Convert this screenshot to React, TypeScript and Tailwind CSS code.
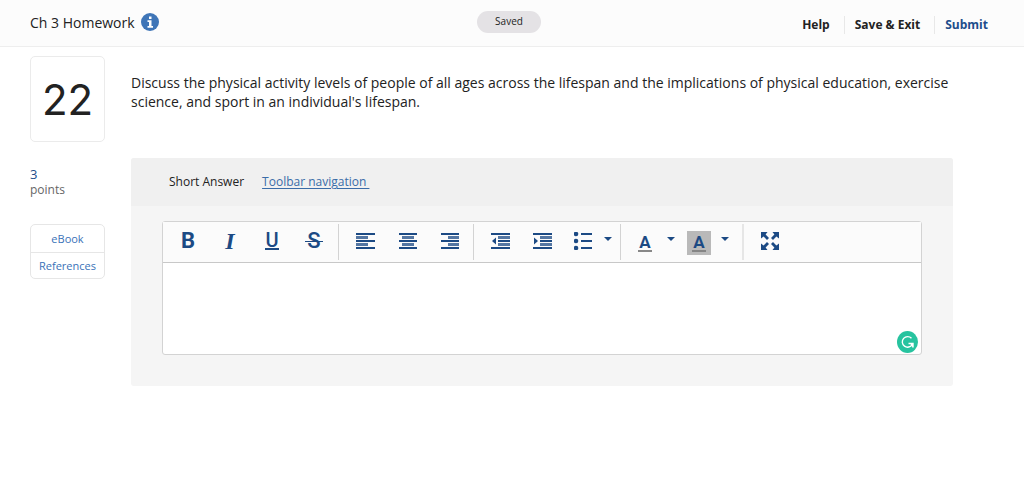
import React from 'react';

type ToolProps = {
  label: string;
  className?: string;
  children: React.ReactNode;
};

const Tool = ({ label, className = 'w-[42px]', children }: ToolProps) => (
  <button type="button" aria-label={label} className={`flex h-9 items-center justify-center pb-0.5 ${className}`}>
    {children}
  </button>
);

const Group = ({ className, children }: { className: string; children: React.ReactNode }) => (
  <div className={`flex h-9 items-center ${className}`}>{children}</div>
);

// Each line is [x, y, width, height] on a 20x16 canvas
const alignIcons = [
  { label: 'Align left', lines: [[0, 0, 19, 2], [0, 3, 12, 3], [0, 7, 19, 2], [0, 10, 12, 3], [0, 14, 19, 2]] },
  { label: 'Align center', lines: [[1, 0, 18, 2], [4, 3, 12, 3], [1, 7, 18, 2], [4, 10, 12, 3], [1, 14, 18, 2]] },
  { label: 'Align right', lines: [[1, 0, 18, 2], [8, 3, 11, 3], [1, 7, 18, 2], [8, 10, 11, 3], [1, 14, 18, 2]] },
];

const indentIcons = [
  { label: 'Outdent', arrow: 'M5 4.500v7L1 8z' },
  { label: 'Indent', arrow: 'M1 4.500v7L5 8z' },
];

const Caret = () => (
  <svg width="8" height="4" viewBox="0 0 8 4" fill="currentColor" className="mb-1">
    <path d="M0 0h8L4 4z" />
  </svg>
);

const App = () => {
  return (
    <div className="min-h-screen bg-white font-['Open_Sans',sans-serif] text-[#222]">
      <header className="grid h-[47px] grid-cols-[1fr_auto_1fr] items-center border-b border-[#eee] bg-[#fcfcfc] pr-9 pl-[30px]">
        <div className="flex items-center gap-1.5 pb-0.5">
          <h1 className="text-[14px]">Ch 3 Homework</h1>
          <button type="button" aria-label="Assignment information">
            <svg width="18" height="18" viewBox="0 0 18 18">
              <circle cx="9" cy="9" r="9" fill="#3f75b7" />
              <path d="M8 3.500h2.500V6H8zM6.500 7.300h4V13H12v1.700H6.500V13H8V9H6.500z" fill="#fff" />
            </svg>
          </button>
        </div>
        <div role="status" className="mb-[3px] h-[22px] rounded-full bg-[#e4e2e5] px-[18px] text-[10px] leading-[21px]">
          Saved
        </div>
        <nav className="mt-1 flex h-[18px] items-center justify-end divide-x divide-[#e8e8e8] text-[12px] font-bold">
          <a href="#help" className="pr-[14px]">Help</a>
          <a href="#exit" className="pr-[14px] pl-[10px]">Save &amp; Exit</a>
          <a href="#submit" className="pl-[10px] text-[#1d4d8b]">Submit</a>
        </nav>
      </header>

      <div className="flex gap-[26px] pt-[9px] pr-[71px] pl-[30px]">
        <aside className="w-[75px] shrink-0">
          <div className="flex h-[86px] items-center justify-center rounded-[5px] border border-[#ebebeb] font-['Inter',sans-serif] text-[42px]">
            22
          </div>
          <p className="mt-6 text-[13px] leading-4 text-[#1d4d8b]">3</p>
          <p className="text-[12px] leading-4 text-[#666]">points</p>
          <div className="mt-[26px] flex flex-col divide-y divide-[#e6e6e6] rounded-[5px] border border-[#e6e6e6] text-center text-[11px] text-[#3a72b8]">
            <a href="#ebook" className="leading-[27px]">eBook</a>
            <a href="#references" className="leading-[25px]">References</a>
          </div>
        </aside>

        <main className="min-w-0 flex-1">
          <p className="h-[102px] pt-[17px] text-[14px] leading-[19px]">
            Discuss the physical activity levels of people of all ages across the lifespan and the implications of physical education, exercise science, and sport in an individual's lifespan.
          </p>

          <section className="rounded-[3px] bg-[#f5f5f5]">
            <div className="flex h-12 items-center gap-[18px] rounded-t-[3px] bg-[#f0f0f0] pl-[38px] text-[12px]">
              <label htmlFor="answer">Short Answer</label>
              <a href="#toolbar" className="whitespace-pre text-[#3a6ca8] underline underline-offset-2">{'Toolbar navigation '}</a>
            </div>

            <div className="px-[31px] pt-[15px] pb-[31px]">
              <div className="relative rounded-[3px] border border-[#d3d3d3] bg-white">
                <div className="flex h-[41px] items-center border-b border-[#c8c8c8] bg-[#fbfbfb] text-[#1c4a84]">
                  <Group className="border-r border-[#d3d3d3] pr-[3px] pl-1">
                    <Tool label="Bold">
                      <span className="font-['Roboto',sans-serif] text-[22px] leading-5 font-bold">B</span>
                    </Tool>
                    <Tool label="Italic">
                      <span className="font-['Liberation_Serif',serif] text-[24px] leading-5 font-bold italic">I</span>
                    </Tool>
                    <Tool label="Underline">
                      <span className="border-b-2 font-['Roboto',sans-serif] text-[20px] leading-4 font-medium">U</span>
                    </Tool>
                    <Tool label="Strikethrough">
                      <span className="relative px-0.5 font-['Roboto',sans-serif] text-[22px] leading-5 font-medium">
                        S
                        <span className="absolute inset-x-0 top-1/2 h-px bg-current" />
                      </span>
                    </Tool>
                  </Group>

                  <Group className="border-r border-[#d3d3d3] pr-0.5 pl-1.5">
                    {alignIcons.map(({ label, lines }) => (
                      <Tool key={label} label={label}>
                        <svg width="20" height="16" viewBox="0 0 20 16" fill="currentColor">
                          {lines.map(([x, y, w, h]) => (
                            <rect key={y} x={x} y={y} width={w} height={h} opacity={h === 3 ? 0.75 : 1} />
                          ))}
                        </svg>
                      </Tool>
                    ))}
                  </Group>

                  <Group className="border-r border-[#d3d3d3] pr-1.5 pl-1.5">
                    {indentIcons.map(({ label, arrow }) => (
                      <Tool key={label} label={label}>
                        <svg width="20" height="16" viewBox="0 0 20 16" fill="currentColor">
                          <path d="M0 0h19v2H0zM7 7h12v2H7zM0 14h19v2H0z" />
                          <path d="M7 3h12v3H7zM7 10h12v3H7z" opacity="0.75" />
                          <path d={arrow} />
                        </svg>
                      </Tool>
                    ))}
                    <Tool label="Bulleted list" className="w-[38px]">
                      <svg width="18" height="18" viewBox="0 0 18 18" fill="currentColor">
                        <circle cx="2" cy="2" r="2.300" />
                        <circle cx="2" cy="9" r="2.300" />
                        <circle cx="2" cy="16" r="2.300" />
                        <path d="M7 1h11v2H7zM7 8h11v2H7zM7 15h11v2H7z" />
                      </svg>
                    </Tool>
                    <Tool label="List styles" className="w-3"><Caret /></Tool>
                  </Group>

                  <Group className="border-r-2 border-[#e6e6e6] pr-[11px] pl-1.5">
                    <Tool label="Text color" className="w-9">
                      <span className="mt-1 border-b-2 border-[#888] px-px font-['Roboto',sans-serif] text-[17px] leading-4 font-bold">A</span>
                    </Tool>
                    <Tool label="Text color options" className="w-4"><Caret /></Tool>
                    <Tool label="Background color" className="w-10">
                      <span className="mt-1 flex h-6 w-6 items-center justify-center bg-[#b9b9b9]">
                        <span className="border-b-2 border-[#858585] px-px font-['Roboto',sans-serif] text-[17px] leading-4 font-bold">A</span>
                      </span>
                    </Tool>
                    <Tool label="Background color options" className="w-3"><Caret /></Tool>
                  </Group>

                  <Group className="pl-[5px]">
                    <Tool label="Full screen">
                      <svg width="18" height="18" viewBox="0 0 18 18" fill="currentColor">
                        <path d="M0 0h6.500L4.600 2.600 8 6 6 8 2.600 4.600 0 6.500z" />
                        <path d="M18 0h-6.500l1.900 2.600L10 6l2 2 3.400-3.400L18 6.500z" />
                        <path d="M0 18h6.500l-1.900-2.600L8 12l-2-2-3.400 3.400L0 11.500z" />
                        <path d="M18 18h-6.500l1.900-2.600L10 12l2-2 3.400 3.400 2.600-1.900z" />
                      </svg>
                    </Tool>
                  </Group>
                </div>

                <textarea id="answer" className="block h-[91px] w-full resize-none p-2 text-[14px] outline-none" />

                <button type="button" aria-label="Open Grammarly" className="absolute right-[3px] bottom-px">
                  <svg width="21" height="22" viewBox="0 0 21 22" fill="none">
                    <ellipse cx="10.500" cy="11" rx="10.500" ry="11" fill="#27c39f" />
                    <path d="M14.500 7.300A5.300 5.300 0 1 0 15.200 13.500" stroke="#fff" strokeWidth="1.400" />
                    <path d="M11.500 12.500h4.500v4" stroke="#fff" strokeWidth="1.400" />
                    <path d="M13 12.500h3v4z" fill="#fff" />
                  </svg>
                </button>
              </div>
            </div>
          </section>
        </main>
      </div>
    </div>
  );
};

export default App;
